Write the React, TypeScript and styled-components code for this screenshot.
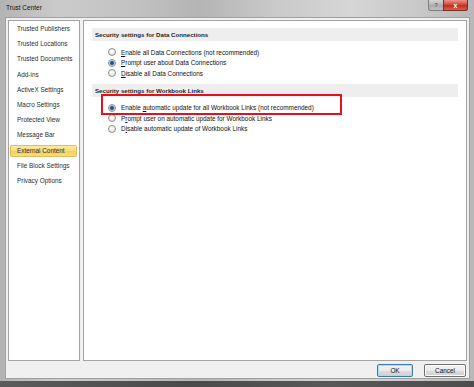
import React from "react";
import styled, { createGlobalStyle } from "styled-components";

const Global = createGlobalStyle`
  html, body { margin: 0; padding: 0; width: 474px; height: 387px; overflow: hidden; background: #4e4e4e; }
  #root { width: 474px; height: 387px; }
  * { box-sizing: border-box; }
`;

const Window = styled.div`
  width: 474px;
  height: 387px;
  display: flex;
  flex-direction: column;
  font-family: "Liberation Sans", Arial, sans-serif;
  color: #111111;
  background: linear-gradient(90deg, #b3b3b3 0%, #cbcbcb 12%, #c2c2c2 28%, #b4b4b4 42%, #c9c9c9 58%, #d6d6d6 74%, #c6c6c6 90%, #b8b8b8 100%);
`;

const TitleBar = styled.div`
  height: 17px;
  display: flex;
  align-items: flex-start;
  justify-content: space-between;
  padding-right: 6px;
`;

const Title = styled.div`
  font-size: 6.5px;
  line-height: 9px;
  padding: 3px 0 0 6px;
  color: #111111;
`;

const Controls = styled.div`
  display: flex;
`;

const HelpButton = styled.div`
  width: 15px;
  height: 11px;
  border: 1px solid #7d7d7d;
  border-top: none;
  border-right: none;
  border-radius: 0 0 0 3px;
  background: linear-gradient(#d6d6d6, #b5b5b5 50%, #a8a8a8 51%, #c2c2c2);
  display: flex;
  align-items: center;
  justify-content: center;
  font-size: 6px;
  font-weight: bold;
  color: #5f6b5f;
`;

const CloseButton = styled.div`
  width: 25px;
  height: 11px;
  border: 1px solid #7a2b23;
  border-top: none;
  border-radius: 0 0 3px 0;
  background: linear-gradient(#e99488, #d24a3b 45%, #c2301f 55%, #d9604d);
  display: flex;
  align-items: center;
  justify-content: center;
  font-size: 7px;
  font-weight: bold;
  color: #ffffff;
`;

const Body = styled.div`
  height: 362px;
  margin: 0 4px 0 5px;
  border: 1px solid #9f9f9f;
  background: #f0f0f0;
  padding: 2px 2px 1px 2px;
  display: flex;
  flex-direction: column;
`;

const Main = styled.div`
  height: 341px;
  display: flex;
  gap: 3px;
`;

const Sidebar = styled.div`
  width: 72px;
  height: 100%;
  background: #ffffff;
  border: 1px solid #a3a3a3;
  padding: 2px 2px 0 1px;
  display: flex;
  flex-direction: column;
`;

const NavItem = styled.div<{ $active?: boolean }>`
  height: 12px;
  margin-bottom: 3.2px;
  padding-left: 6px;
  font-size: 6.4px;
  line-height: 10px;
  color: #2e2e2e;
  border: 1px solid ${(p) => (p.$active ? "#e3bd55" : "transparent")};
  border-radius: 2px;
  background: ${(p) => (p.$active ? "linear-gradient(#fdeaa6, #f9da78 50%, #f6cf5b 51%, #f9dc7c)" : "transparent")};
  white-space: nowrap;
`;

const Content = styled.div`
  position: relative;
  flex: 1;
  height: 100%;
  background: #ffffff;
  border: 1px solid #a3a3a3;
  padding: 7px 8px 0 8px;
`;

const Section = styled.div<{ $gap?: number }>`
  margin-top: ${(p) => p.$gap ?? 0}px;
`;

const SectionHeader = styled.div`
  height: 13px;
  background: #eeeeee;
  padding-left: 3px;
  font-size: 6.15px;
  font-weight: bold;
  line-height: 13px;
  color: #1e1e1e;
  white-space: nowrap;
`;

const Options = styled.div`
  margin-top: 6px;
  display: flex;
  flex-direction: column;
`;

const OptionRow = styled.div`
  height: 10.45px;
  display: flex;
  align-items: center;
  gap: 5px;
  padding-left: 16px;
  font-size: 6.4px;
  color: #111111;
  white-space: nowrap;
`;

const RadioDot = styled.span<{ $checked?: boolean }>`
  flex: none;
  width: 8px;
  height: 8px;
  border-radius: 50%;
  border: 1px solid #8e8f8f;
  background: ${(p) =>
    p.$checked
      ? "radial-gradient(circle at 50% 50%, #173f68 0, #2b6aa3 1.6px, #a9bed1 2.4px, #f2f2f2 3px)"
      : "radial-gradient(circle at 45% 40%, #ffffff 0, #f1f1f1 45%, #d0d0d0 100%)"};
`;

const Highlight = styled.div`
  position: absolute;
  left: 17px;
  top: 73px;
  width: 241px;
  height: 21px;
  border: 2px solid #e2121c;
  pointer-events: none;
`;

const Footer = styled.div`
  margin-top: 3px;
  height: 13px;
  display: flex;
  justify-content: flex-end;
  gap: 11px;
  padding-right: 1px;
`;

const Button = styled.div<{ $default?: boolean; $w: number }>`
  width: ${(p) => p.$w}px;
  height: 13px;
  border: 1px solid ${(p) => (p.$default ? "#3d7bad" : "#707070")};
  border-radius: 2px;
  box-shadow: ${(p) => (p.$default ? "inset 0 0 0 1px #a9dcf6" : "inset 0 0 0 1px #fcfcfc")};
  background: linear-gradient(#f3f3f3, #ebebeb 50%, #dddddd 51%, #cfcfcf);
  display: flex;
  align-items: center;
  justify-content: center;
  font-size: 6.4px;
  color: #111111;
`;

const BottomFrame = styled.div`
  height: 2px;
`;

const Shadow = styled.div`
  height: 6px;
  background: linear-gradient(90deg, #5b5b5b, #4a4a4a 40%, #585858 70%, #4d4d4d);
`;

const navItems = [
  "Trusted Publishers",
  "Trusted Locations",
  "Trusted Documents",
  "Add-ins",
  "ActiveX Settings",
  "Macro Settings",
  "Protected View",
  "Message Bar",
  "External Content",
  "File Block Settings",
  "Privacy Options",
];

type Opt = { pre: string; key: string; post: string; checked?: boolean };

const dataOptions: Opt[] = [
  { pre: "", key: "E", post: "nable all Data Connections (not recommended)" },
  { pre: "", key: "P", post: "rompt user about Data Connections", checked: true },
  { pre: "", key: "D", post: "isable all Data Connections" },
];

const linkOptions: Opt[] = [
  { pre: "Enable ", key: "a", post: "utomatic update for all Workbook Links (not recommended)", checked: true },
  { pre: "P", key: "r", post: "ompt user on automatic update for Workbook Links" },
  { pre: "D", key: "i", post: "sable automatic update of Workbook Links" },
];

const OptionList = ({ items }: { items: Opt[] }) => (
  <Options>
    {items.map((o, i) => (
      <OptionRow key={i}>
        <RadioDot $checked={o.checked} />
        <span>
          {o.pre}
          <u>{o.key}</u>
          {o.post}
        </span>
      </OptionRow>
    ))}
  </Options>
);

export default function App() {
  return (
    <>
      <Global />
      <Window>
        <TitleBar>
          <Title>Trust Center</Title>
          <Controls>
            <HelpButton>?</HelpButton>
            <CloseButton>x</CloseButton>
          </Controls>
        </TitleBar>
        <Body>
          <Main>
            <Sidebar>
              {navItems.map((n) => (
                <NavItem key={n} $active={n === "External Content"}>
                  {n}
                </NavItem>
              ))}
            </Sidebar>
            <Content>
              <Section>
                <SectionHeader>Security settings for Data Connections</SectionHeader>
                <OptionList items={dataOptions} />
              </Section>
              <Section $gap={5.3}>
                <SectionHeader>Security settings for Workbook Links</SectionHeader>
                <OptionList items={linkOptions} />
              </Section>
              <Highlight />
            </Content>
          </Main>
          <Footer>
            <Button $default $w={36}>OK</Button>
            <Button $w={42}>Cancel</Button>
          </Footer>
        </Body>
        <BottomFrame />
        <Shadow />
      </Window>
    </>
  );
}
